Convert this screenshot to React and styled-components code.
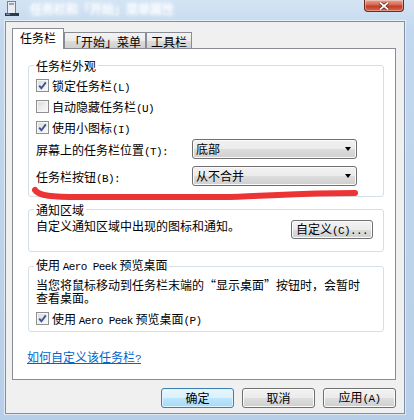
import React from 'react';
import styled, { createGlobalStyle } from 'styled-components';

const GlobalStyle = createGlobalStyle`
  html, body { margin: 0; padding: 0; }
  body {
    width: 414px;
    height: 420px;
    overflow: hidden;
    background: #b9d1ea;
    font-family: "Noto Sans CJK SC", "Liberation Sans", sans-serif;
    font-size: 12px;
    color: #000;
  }
  * { box-sizing: border-box; }
`;

const Window = styled.div`
  position: relative;
  width: 414px;
  height: 420px;
  display: flex;
  flex-direction: column;
  background: linear-gradient(180deg, #d4e4f4 0px, #c3d8ee 30px, #b7cfe9 100%);
  overflow: hidden;
`;

const TitleBar = styled.div`
  height: 21px;
  flex: none;
  display: flex;
  align-items: flex-start;
  padding: 0 10px 0 5px;
`;

const AppIcon = styled.svg`
  flex: none;
  margin-top: 1px;
`;

const Caption = styled.span`
  margin: 1px 0 0 9px;
  line-height: 16px;
  color: rgba(255, 255, 255, 0.8);
  text-shadow: 0 0 6px #fff, 0 0 3px #eaf3fb;
  filter: blur(0.8px);
`;

const CloseButton = styled.div`
  margin-left: auto;
  width: 40px;
  height: 12px;
  display: flex;
  align-items: center;
  justify-content: center;
  border: 1px solid #6a2a22;
  border-top: none;
  border-radius: 0 0 4px 4px;
  background: linear-gradient(180deg, #e8a597 0%, #d5654f 45%, #c13d25 55%, #d8674c 100%);
  box-shadow: inset 0 0 0 1px rgba(255, 255, 255, 0.35);
`;

const Client = styled.div`
  flex: 1;
  margin: 0 9px 6px 5px;
  padding: 6px 8px 5px 6px;
  display: flex;
  flex-direction: column;
  background: #f0f0f0;
  border: 1px solid #7f8fa3;
  box-shadow: 0 0 0 1px rgba(255, 255, 255, 0.55);
`;

const TabStrip = styled.div`
  height: 20px;
  flex: none;
  display: flex;
  align-items: flex-end;
`;

const Tab = styled.div`
  position: relative;
  border: 1px solid #898c95;
  border-bottom: none;
  white-space: nowrap;
  ${(p) =>
    p.$active
      ? `
    z-index: 1;
    height: 21px;
    margin-bottom: -1px;
    padding: 2px 7px 0;
    line-height: 14px;
    background: #fff;
  `
      : `
    height: 16px;
    padding: 2px 4px 0;
    line-height: 13px;
    background: linear-gradient(180deg, #f3f3f3 0%, #ebebeb 50%, #dddddd 51%, #cfcfcf 100%);
  `}
`;

const Panel = styled.div`
  flex: 1;
  display: flex;
  flex-direction: column;
  padding: 10px 11px 0 15px;
  background: #fff;
  border: 1px solid #898c95;
`;

const Group = styled.fieldset`
  margin: ${(p) => p.$top || 0}px 0 0;
  padding: ${(p) => p.$pad};
  min-width: 0;
  border: 1px solid #d5dfe5;
  border-radius: 3px;
`;

const Legend = styled.legend`
  margin-left: -2px;
  padding: 0 2px;
  line-height: 13px;
  white-space: nowrap;
`;

const Latin = styled.span`
  font-family: "Liberation Mono", "DejaVu Sans Mono", monospace;
  font-size: 11px;
  letter-spacing: -0.6px;
`;

const CheckRow = styled.label`
  display: flex;
  align-items: center;
  gap: 3px;
  height: ${(p) => p.$h || 21}px;
  margin-top: ${(p) => p.$top || 0}px;
  white-space: nowrap;
`;

const Box = styled.span`
  flex: none;
  width: 13px;
  height: 13px;
  display: inline-flex;
  align-items: center;
  justify-content: center;
  border: 1px solid #8e8f8f;
  background: linear-gradient(135deg, #d8d8d8 0%, #ececec 50%, #fbfbfb 100%);
  box-shadow: inset 0 0 0 1px #f6f6f6;
`;

const FieldGrid = styled.div`
  display: grid;
  grid-template-columns: 156px 165px;
  grid-auto-rows: 20px;
  row-gap: 7px;
  align-items: center;
  margin-top: 1px;
`;

const Combo = styled.div`
  height: 20px;
  display: flex;
  align-items: center;
  justify-content: space-between;
  padding: 0 4px 0 3px;
  border: 1px solid #707070;
  border-radius: 3px;
  background: linear-gradient(180deg, #f2f2f2 0%, #ebebeb 50%, #dddddd 51%, #cfcfcf 100%);
  box-shadow: inset 0 0 0 1px #fbfbfb;
  line-height: 14px;
`;

const Arrow = styled.span`
  width: 0;
  height: 0;
  margin-right: 1px;
  border-left: 3.5px solid transparent;
  border-right: 3.5px solid transparent;
  border-top: 4px solid #000;
`;

const NotifyRow = styled.div`
  display: flex;
  align-items: flex-start;
  justify-content: space-between;
  height: 20px;
  margin-top: 3px;
`;

const Note = styled.p`
  margin: ${(p) => p.$top || 0}px 0 0;
  line-height: 13px;
`;

const Button = styled.button`
  width: ${(p) => p.$w}px;
  height: ${(p) => p.$h || 20}px;
  margin-top: ${(p) => p.$top || 0}px;
  padding: 0;
  font: inherit;
  line-height: 14px;
  color: #000;
  border-radius: 3px;
  white-space: nowrap;
  border: 1px solid ${(p) => (p.$primary ? '#3c7fb1' : '#707070')};
  background: ${(p) =>
    p.$primary
      ? 'linear-gradient(180deg, #eaf6fd 0%, #d9f0fc 50%, #bee6fd 51%, #a7d9f5 100%)'
      : 'linear-gradient(180deg, #f2f2f2 0%, #ebebeb 50%, #dddddd 51%, #cfcfcf 100%)'};
  box-shadow: inset 0 0 0 1px ${(p) => (p.$primary ? '#dff2fd' : '#fbfbfb')};
`;

const HelpLink = styled.a`
  align-self: flex-start;
  margin: 18px 0 0 -1px;
  line-height: 14px;
  color: #0066cc;
  text-decoration: underline;
`;

const ButtonRow = styled.div`
  flex: none;
  display: flex;
  justify-content: flex-end;
  gap: 8px;
  margin-top: 8px;
`;

const Scribble = styled.svg`
  position: absolute;
  left: 0;
  top: 0;
  pointer-events: none;
`;

function CheckBox({ checked, top, h, children }) {
  return (
    <CheckRow $top={top} $h={h}>
      <Box>
        {checked && (
          <svg width="9" height="9" viewBox="0 0 9 9">
            <path d="M1.2 4.6 L3.4 7.2 L7.8 1.4" fill="none" stroke="#3d5496" strokeWidth="1.9" />
          </svg>
        )}
      </Box>
      <span>{children}</span>
    </CheckRow>
  );
}

export default function App() {
  return (
    <>
      <GlobalStyle />
      <Window>
        <TitleBar>
          <AppIcon width="16" height="15" viewBox="0 0 16 15">
            <rect x="2.5" y="0.5" width="8" height="12" fill="#e9edf1" stroke="#7a8289" />
            <rect x="4" y="2" width="5" height="2" fill="#9aa6b2" />
            <rect x="0" y="12" width="14" height="3" fill="#2e3a46" />
            <rect x="1" y="12.5" width="4" height="1.5" fill="#6b8cb0" />
          </AppIcon>
          <Caption>任务栏和「开始」菜单属性</Caption>
          <CloseButton>
            <svg width="12" height="8" viewBox="0 0 12 8">
              <path d="M2 0.5 L10 7.5 M10 0.5 L2 7.5" stroke="#5a1c14" strokeWidth="3.2" />
              <path d="M2 0.5 L10 7.5 M10 0.5 L2 7.5" stroke="#fff" strokeWidth="1.8" />
            </svg>
          </CloseButton>
        </TitleBar>

        <Client>
          <TabStrip>
            <Tab $active>任务栏</Tab>
            <Tab>「开始」菜单</Tab>
            <Tab>工具栏</Tab>
          </TabStrip>

          <Panel>
            <Group $pad="3px 10px 10px 7px">
              <Legend>任务栏外观</Legend>
              <CheckBox checked>
                锁定任务栏<Latin>(L)</Latin>
              </CheckBox>
              <CheckBox>
                自动隐藏任务栏<Latin>(U)</Latin>
              </CheckBox>
              <CheckBox checked>
                使用小图标<Latin>(I)</Latin>
              </CheckBox>
              <FieldGrid>
                <span>
                  屏幕上的任务栏位置<Latin>(T):</Latin>
                </span>
                <Combo>
                  <span>底部</span>
                  <Arrow />
                </Combo>
                <span>
                  任务栏按钮<Latin>(B):</Latin>
                </span>
                <Combo>
                  <span>从不合并</span>
                  <Arrow />
                </Combo>
              </FieldGrid>
            </Group>

            <Group $top={6} $pad="0 10px 12px 7px">
              <Legend>通知区域</Legend>
              <NotifyRow>
                <Note>自定义通知区域中出现的图标和通知。</Note>
                <Button $w={82} $h={19} $top={1}>
                  自定义<Latin>(C)...</Latin>
                </Button>
              </NotifyRow>
            </Group>

            <Group $top={6} $pad="0 10px 3px 7px">
              <Legend>
                使用 <Latin>Aero Peek</Latin> 预览桌面
              </Legend>
              <Note $top={4}>
                当您将鼠标移动到任务栏末端的“显示桌面”按钮时，会暂时
                <br />
                查看桌面。
              </Note>
              <CheckBox checked top={4} h={20}>
                使用 <Latin>Aero Peek</Latin> 预览桌面<Latin>(P)</Latin>
              </CheckBox>
            </Group>

            <HelpLink href="#">
              如何自定义该任务栏<Latin>?</Latin>
            </HelpLink>
          </Panel>

          <ButtonRow>
            <Button $w={73} $primary>
              确定
            </Button>
            <Button $w={73}>取消</Button>
            <Button $w={73}>
              应用<Latin>(A)</Latin>
            </Button>
          </ButtonRow>
        </Client>

        <Scribble width="414" height="420" viewBox="0 0 414 420">
          <path
            d="M35 190 C39 196 52 197 80 197 L230 197 C270 196 300 193 355 193"
            fill="none"
            stroke="#ec3434"
            strokeWidth="6"
            strokeLinecap="round"
          />
        </Scribble>
      </Window>
    </>
  );
}
